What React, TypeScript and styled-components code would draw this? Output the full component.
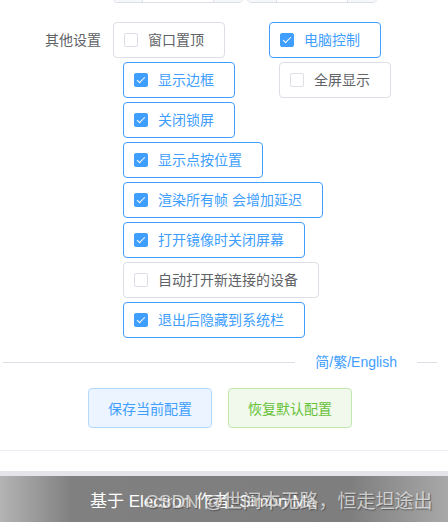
import React from 'react';
import styled, { createGlobalStyle } from 'styled-components';

const GlobalStyle = createGlobalStyle`
    body {
        margin: 0;
        background: #ffffff;
        font-family: "Liberation Sans", "Noto Sans CJK SC", sans-serif;
    }
`

type Option = { label: string; checked: boolean };

const options: Option[] = [
    { label: '窗口置顶', checked: false },
    { label: '电脑控制', checked: true },
    { label: '显示边框', checked: true },
    { label: '全屏显示', checked: false },
    { label: '关闭锁屏', checked: true },
    { label: '显示点按位置', checked: true },
    { label: '渲染所有帧 会增加延迟', checked: true },
    { label: '打开镜像时关闭屏幕', checked: true },
    { label: '自动打开新连接的设备', checked: false },
    { label: '退出后隐藏到系统栏', checked: true },
];

const NumberInput = () => (
    <InputNumber>
        <StepBtn />
        <InputField />
        <StepBtn />
    </InputNumber>
);

export default function App() {
    return (
        <Page>
            <GlobalStyle />
            <Main>
                <TopRow>
                    <NumberInput />
                    <NumberInput />
                </TopRow>
                <FormItem>
                    <Label>其他设置</Label>
                    <Content>
                        {options.map((o) => (
                            <CheckBox key={o.label} $checked={o.checked}>
                                <Box $checked={o.checked} />
                                <CheckText>{o.label}</CheckText>
                            </CheckBox>
                        ))}
                    </Content>
                </FormItem>
                <Divider>
                    <DividerText>简/繁/English</DividerText>
                </Divider>
                <Buttons>
                    <PlainBtn $kind="primary">保存当前配置</PlainBtn>
                    <PlainBtn $kind="success">恢复默认配置</PlainBtn>
                </Buttons>
            </Main>
            <Rule />
            <Band />
            <Footer>
                <FooterText>基于 Electron 作者: Simon Ma</FooterText>
                <Watermark>CSDN @世间本无路，恒走坦途出</Watermark>
            </Footer>
        </Page>
    );
}

const Page = styled.div`
    width: 448px;
    height: 522px;
    display: flex;
    flex-direction: column;
    overflow: hidden;
`
const Main = styled.div`
    padding: 0 11px 0 3px;
`
const TopRow = styled.div`
    height: 3px;
    overflow: hidden;
    display: flex;
    align-items: flex-end;
    gap: 4px;
    padding-left: 110px;
`
const InputNumber = styled.div`
    width: 130px;
    height: 28px;
    flex-shrink: 0;
    box-sizing: border-box;
    border: 1px solid #dcdfe6;
    border-radius: 4px;
    display: flex;
    overflow: hidden;
`
const StepBtn = styled.div`
    width: 28px;
    background: #f5f7fa;
    &:first-child { border-right: 1px solid #dcdfe6; }
    &:last-child { border-left: 1px solid #dcdfe6; }
`
const InputField = styled.div`
    flex: 1;
    background: #ffffff;
`
const FormItem = styled.div`
    display: flex;
    margin-top: 17px;
`
const Label = styled.div`
    width: 110px;
    flex-shrink: 0;
    box-sizing: border-box;
    padding-right: 12px;
    text-align: right;
    line-height: 40px;
    font-size: 14px;
    color: #606266;
`
const Content = styled.div`
    flex: 1;
    display: flex;
    flex-wrap: wrap;
    column-gap: 4px;
    align-content: flex-start;
`
const CheckBox = styled.label<{ $checked: boolean }>`
    display: flex;
    align-items: center;
    height: 36px;
    box-sizing: border-box;
    margin: 2px 30px 2px 10px;
    padding: 0 20px 0 10px;
    border: 1px solid ${(p) => (p.$checked ? '#409eff' : '#dcdfe6')};
    border-radius: 4px;
    color: ${(p) => (p.$checked ? '#409eff' : '#606266')};
    font-size: 14px;
    white-space: nowrap;
    &:first-child { margin-left: 0; }
`
const Box = styled.span<{ $checked: boolean }>`
    position: relative;
    width: 14px;
    height: 14px;
    box-sizing: border-box;
    border: 1px solid ${(p) => (p.$checked ? '#409eff' : '#dcdfe6')};
    border-radius: 2px;
    background: ${(p) => (p.$checked ? '#409eff' : '#ffffff')};
    &::after {
        content: '';
        display: ${(p) => (p.$checked ? 'block' : 'none')};
        position: absolute;
        left: 4px;
        top: 1px;
        width: 3px;
        height: 7px;
        border: 1px solid #ffffff;
        border-left: 0;
        border-top: 0;
        transform: rotate(45deg);
    }
`
const CheckText = styled.span`
    padding-left: 10px;
    line-height: 20px;
`
const Divider = styled.div`
    position: relative;
    height: 1px;
    background: #dcdfe6;
    margin: 22px 0 25px;
`
const DividerText = styled.span`
    position: absolute;
    right: 20px;
    top: 0;
    transform: translateY(-50%);
    padding: 0 20px;
    background: #ffffff;
    color: #409eff;
    font-size: 14px;
    line-height: 20px;
`
const Buttons = styled.div`
    display: flex;
    justify-content: center;
    gap: 16px;
`
const PlainBtn = styled.button<{ $kind: 'primary' | 'success' }>`
    height: 40px;
    padding: 0 19px;
    border-radius: 4px;
    font-family: inherit;
    font-size: 14px;
    border: 1px solid ${(p) => (p.$kind === 'primary' ? '#b3d8ff' : '#c2e7b0')};
    background: ${(p) => (p.$kind === 'primary' ? '#ecf5ff' : '#f0f9eb')};
    color: ${(p) => (p.$kind === 'primary' ? '#409eff' : '#67c23a')};
`
const Rule = styled.div`
    margin-top: 22px;
    height: 1px;
    background: #ebeef5;
`
const Band = styled.div`
    margin-top: 20px;
    height: 5px;
    background: #e4e4ea;
`
const Footer = styled.div`
    position: relative;
    flex: 1;
    display: flex;
    align-items: center;
    padding-left: 90px;
    background: linear-gradient(to right, #b4b4b4 0%, #808080 16%, #7e7e7e 78%, #a8a8a8 100%);
`
const FooterText = styled.span`
    color: #ffffff;
    font-size: 17px;
    white-space: nowrap;
`
const Watermark = styled.span`
    position: absolute;
    left: 145px;
    top: 50%;
    transform: translateY(-50%);
    color: rgba(235, 235, 235, 0.75);
    text-shadow: 1px 1px 1px rgba(60, 60, 60, 0.6);
    font-size: 19px;
    white-space: nowrap;
`
